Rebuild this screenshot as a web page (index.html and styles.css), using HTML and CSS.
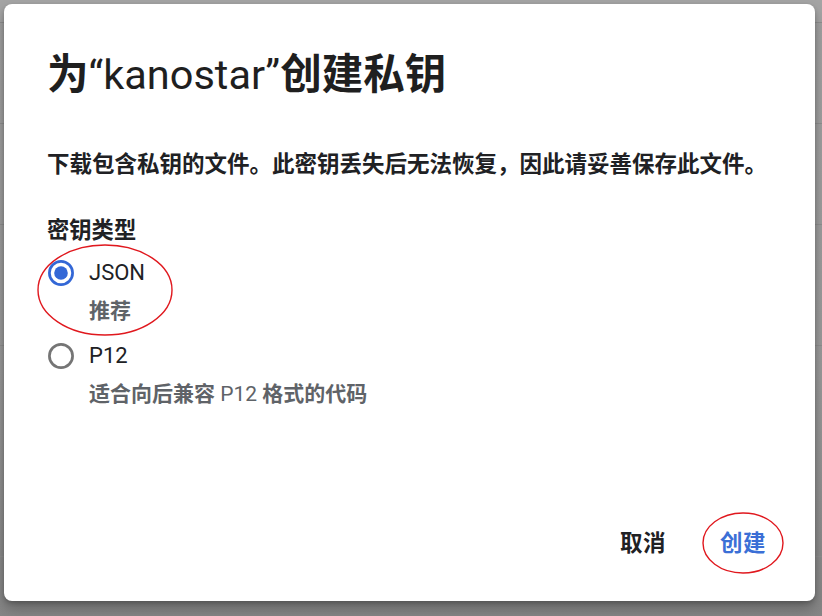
FILE: index.html
```html
<!DOCTYPE html>
<html lang="zh-CN">
<head>
<meta charset="utf-8">
<title>创建私钥</title>
<link rel="stylesheet" href="styles.css">
</head>
<body>
<div class="page">
  <div class="under">
    <div class="under-row r1"></div>
    <div class="under-row r2"></div>
    <div class="under-row r3"></div>
    <div class="under-row r4"></div>
    <div class="under-row r5"></div>
  </div>
  <div class="dialog">
    <h1 class="title">为<span class="latin">“kanostar”</span>创建私钥</h1>
    <p class="desc">下载包含私钥的文件。此密钥丢失后无法恢复，因此请妥善保存此文件。</p>
    <div class="label">密钥类型</div>
    <div class="options">
      <div class="option">
        <svg class="radio" width="26" height="26" viewBox="0 0 26 26">
          <circle cx="13" cy="13" r="11.6" fill="none" stroke="#3367d6" stroke-width="2.7"/>
          <circle cx="13" cy="13" r="6.8" fill="#3367d6"/>
        </svg>
        <div class="opt-text">
          <div class="opt-name">JSON</div>
          <div class="opt-hint">推荐</div>
        </div>
      </div>
      <div class="option">
        <svg class="radio" width="26" height="26" viewBox="0 0 26 26">
          <circle cx="13" cy="13" r="11.6" fill="none" stroke="#757575" stroke-width="2.7"/>
        </svg>
        <div class="opt-text">
          <div class="opt-name">P12</div>
          <div class="opt-hint">适合向后兼容 <span class="latin">P12</span> 格式的代码</div>
        </div>
      </div>
    </div>
    <div class="actions">
      <button class="btn">取消</button>
      <button class="btn primary">创建</button>
    </div>
  </div>
  <svg class="annot" width="822" height="616" viewBox="0 0 822 616">
    <ellipse cx="105" cy="290" rx="67" ry="45" fill="none" stroke="#e0181e" stroke-width="1.4"/>
    <ellipse cx="743" cy="543" rx="40" ry="30" fill="none" stroke="#e0181e" stroke-width="1.4"/>
  </svg>
</div>
</body>
</html>
```
FILE: styles.css
```css
html, body {
  margin: 0;
  padding: 0;
}
body {
  width: 822px;
  height: 616px;
  overflow: hidden;
  background: #9a9a9a;
  font-family: Roboto, "Noto Sans CJK SC", sans-serif;
  color: #202124;
}
.page {
  position: relative;
  width: 822px;
  height: 616px;
}
.under {
  display: flex;
  flex-direction: column;
  height: 616px;
  background: linear-gradient(#a2a2a2, #9a9a9a 60%, #868686);
}
.under-row {
  border-bottom: 1px solid #8f8f8f;
}
.r1 { height: 22px; background: #a4a4a4; }
.r2 { height: 100px; }
.r3 { height: 100px; }
.r4 { height: 120px; }
.r5 { height: 210px; }

.dialog {
  position: absolute;
  left: 4px;
  top: 4px;
  width: 811px;
  height: 597px;
  box-sizing: border-box;
  background: #fff;
  border-radius: 8px;
  box-shadow: 0 8px 14px rgba(0,0,0,0.25), 0 2px 4px rgba(0,0,0,0.2);
  padding: 47px 42px 36px 43px;
  display: flex;
  flex-direction: column;
}
.title {
  margin: 0;
  font-size: 41.5px;
  line-height: 48px;
  font-weight: 700;
  color: #1f1f1f;
}
.latin {
  font-weight: 400;
}
.desc {
  margin: 49px 0 0;
  font-size: 22.5px;
  line-height: 32px;
  font-weight: 700;
  color: #202124;
}
.label {
  margin-top: 34px;
  font-size: 22.3px;
  line-height: 32px;
  font-weight: 700;
}
.options {
  margin-top: 11px;
  display: flex;
  flex-direction: column;
  gap: 13px;
}
.option {
  display: flex;
  align-items: flex-start;
  gap: 15px;
}
.radio {
  flex: none;
  margin-top: 3px;
  margin-left: 1px;
}
.opt-text {
  display: flex;
  flex-direction: column;
  gap: 6px;
}
.opt-name {
  font-size: 22px;
  line-height: 32px;
  font-weight: 400;
  color: #202124;
}
.opt-hint {
  font-size: 21px;
  line-height: 32px;
  font-weight: 700;
  color: #5f6368;
}
.actions {
  margin-top: auto;
  margin-right: -4px;
  display: flex;
  justify-content: flex-end;
  gap: 32px;
}
.btn {
  font-family: Roboto, "Noto Sans CJK SC", sans-serif;
  font-size: 22.5px;
  letter-spacing: 0.5px;
  font-weight: 700;
  height: 48px;
  padding: 0 11px;
  border: none;
  background: transparent;
  color: #202124;
  border-radius: 4px;
}
.btn.primary {
  color: #3b6fd6;
}
.annot {
  position: absolute;
  left: 0;
  top: 0;
  pointer-events: none;
}
```
